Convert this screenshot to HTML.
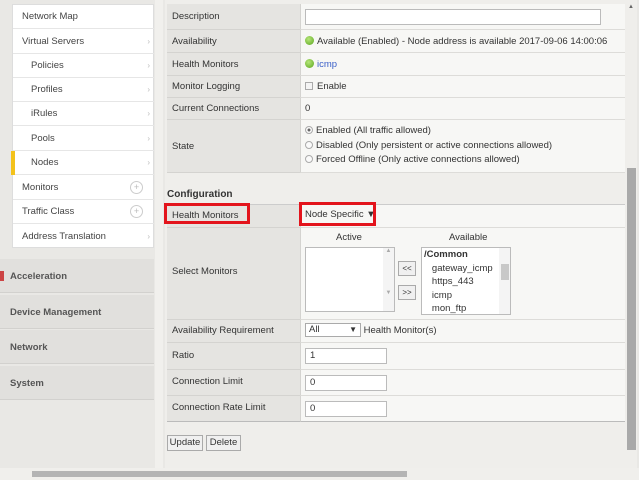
<!DOCTYPE html>
<html><head><style>
*{box-sizing:border-box;margin:0;padding:0}
body{width:639px;height:480px;overflow:hidden;background:#e9e8e5;font-family:"Liberation Sans",Arial,sans-serif;font-size:9.5px;color:#333;position:relative}
.a{position:absolute}
.menu{left:12px;top:4px;width:142px;height:244px;background:#fff;border:1px solid #ddd}
.mi{position:absolute;left:0;width:141px;height:24px;border-bottom:1px solid #e6e6e6;line-height:24px;padding-left:9px;color:#444}
.mi.s{padding-left:18px}
.mi .ar{position:absolute;right:4px;color:#bbb;font-size:8px}
.mi .pl{position:absolute;right:11px;top:5px;width:13px;height:13px;border:1px solid #ccc;border-radius:50%;color:#bbb;font-size:9px;line-height:11px;text-align:center}
.sec{position:absolute;left:0;width:154px;height:34px;border-bottom:1px solid #d2d1ce;background:#e1e0dd;line-height:36px;padding-left:10px;font-weight:bold;color:#555;font-size:9.5px}
.lab{position:absolute;left:167px;width:133px;background:#e5e4e1;border-bottom:1px solid #d4d3d0;padding-left:5px;color:#333}
.val{position:absolute;left:300px;width:325px;background:#f7f7f5;border-bottom:1px solid #dddcd9;border-left:1px solid #d4d3d0;padding-left:4px}
.dot{display:inline-block;width:9px;height:9px;border-radius:50%;background:radial-gradient(circle at 40% 35%,#b6e67a,#5aa51e);vertical-align:-1px;margin-right:3px}
.inp{position:absolute;background:#fff;border:1px solid #bbb;height:16px;padding-left:4px;line-height:14px}
.btn{position:absolute;top:435px;height:16px;border:1px solid #aaa;background:#f0f0f0;line-height:14px;text-align:center;font-size:9.5px}
.rd{display:inline-block;width:8px;height:8px;border-radius:50%;border:1px solid #aaa;background:#fafafa;margin-right:3px;vertical-align:-1px}
.red{position:absolute;border:3px solid #e3141c}
</style></head><body>
<div class="a menu">
<div class="mi" style="top:0">Network Map</div>
<div class="mi" style="top:25px">Virtual Servers<span class="ar">›</span></div>
<div class="mi s" style="top:49px">Policies<span class="ar">›</span></div>
<div class="mi s" style="top:73px">Profiles<span class="ar">›</span></div>
<div class="mi s" style="top:97px">iRules<span class="ar">›</span></div>
<div class="mi s" style="top:122px">Pools<span class="ar">›</span></div>
<div class="mi s" style="top:146px">Nodes<span class="ar">›</span></div>
<div class="mi" style="top:171px">Monitors<span class="pl">+</span></div>
<div class="mi" style="top:195px">Traffic Class<span class="pl">+</span></div>
<div class="mi" style="top:220px;border:0">Address Translation<span class="ar">›</span></div>
</div>
<div class="a" style="left:11px;top:151px;width:4px;height:24px;background:#f3c21b"></div>
<div class="sec" style="top:259px">Acceleration</div>
<div class="sec" style="top:295px">Device Management</div>
<div class="sec" style="top:330px">Network</div>
<div class="sec" style="top:366px">System</div>
<div class="a" style="left:0;top:271px;width:4px;height:10px;background:#c44"></div>
<div class="a" style="left:155px;top:0;width:8px;height:468px;background:#f1f0ed"></div>

<div class="a" style="left:165px;top:0;width:461px;height:470px;background:#efeeeb"></div>
<div class="lab" style="top:4px;height:26px;line-height:26px">Description</div>
<div class="val" style="top:4px;height:26px"><div class="inp" style="left:4px;top:5px;width:296px"></div></div>
<div class="lab" style="top:30px;height:23px;line-height:23px">Availability</div>
<div class="val" style="top:30px;height:23px;line-height:23px"><span class="dot"></span>Available (Enabled) - Node address is available 2017-09-06 14:00:06</div>
<div class="lab" style="top:53px;height:23px;line-height:23px">Health Monitors</div>
<div class="val" style="top:53px;height:23px;line-height:23px"><span class="dot"></span><span style="color:#3a5fc8">icmp</span></div>
<div class="lab" style="top:76px;height:22px;line-height:22px">Monitor Logging</div>
<div class="val" style="top:76px;height:22px;line-height:22px"><span style="display:inline-block;width:8px;height:8px;border:1px solid #aaa;background:#f4f4f4;margin-right:4px;vertical-align:-1px"></span>Enable</div>
<div class="lab" style="top:98px;height:22px;line-height:22px">Current Connections</div>
<div class="val" style="top:98px;height:22px;line-height:22px">0</div>
<div class="lab" style="top:120px;height:53px;line-height:53px">State</div>
<div class="val" style="top:120px;height:53px;line-height:14.5px;padding-top:4px"><span class="rd" style="background:radial-gradient(circle,#666 30%,#fafafa 40%)"></span>Enabled (All traffic allowed)<br><span class="rd"></span>Disabled (Only persistent or active connections allowed)<br><span class="rd"></span>Forced Offline (Only active connections allowed)</div>

<div class="a" style="left:167px;top:189px;font-weight:bold;font-size:10px;color:#333">Configuration</div>
<div class="lab" style="top:204px;height:24px;line-height:22px;border-top:1px solid #ccc">Health Monitors</div>
<div class="val" style="top:204px;height:24px;border-top:1px solid #ccc;line-height:20px">Node Specific ▼</div>
<div class="red" style="left:164px;top:203px;width:86px;height:21px"></div>
<div class="red" style="left:299px;top:202px;width:77px;height:24px"></div>
<div class="lab" style="top:228px;height:92px;line-height:88px">Select Monitors</div>
<div class="val" style="top:228px;height:92px">
<div class="a" style="left:35px;top:4px">Active</div>
<div class="a" style="left:148px;top:4px">Available</div>
<div class="a" style="left:4px;top:19px;width:90px;height:65px;background:#fff;border:1px solid #bbb"><div class="a" style="right:0;top:0;width:11px;height:63px;background:#f4f4f4;color:#aaa;font-size:6px;text-align:center">▲<br><br><br><br><br><br><br>▼</div></div>
<div class="a" style="left:97px;top:33px;width:18px;height:15px;border:1px solid #aaa;background:#f0f0f0;font-size:8px;text-align:center;line-height:13px">&lt;&lt;</div>
<div class="a" style="left:97px;top:57px;width:18px;height:15px;border:1px solid #aaa;background:#f0f0f0;font-size:8px;text-align:center;line-height:13px">&gt;&gt;</div>
<div class="a" style="left:120px;top:19px;width:90px;height:68px;background:#fff;border:1px solid #bbb;line-height:13.5px;padding-left:2px"><b>/Common</b><br>&nbsp;&nbsp;&nbsp;gateway_icmp<br>&nbsp;&nbsp;&nbsp;https_443<br>&nbsp;&nbsp;&nbsp;icmp<br>&nbsp;&nbsp;&nbsp;mon_ftp<div class="a" style="right:0;top:0;width:11px;height:66px;background:#f4f4f4"><div class="a" style="left:2px;top:16px;width:8px;height:16px;background:#c8c8c8"></div></div></div>
</div>
<div class="lab" style="top:320px;height:23px;line-height:22px">Availability Requirement</div>
<div class="val" style="top:320px;height:23px;line-height:22px"><span style="display:inline-block;width:56px;height:14px;border:1px solid #aaa;background:#fff;line-height:12px;padding-left:3px;vertical-align:1px">All<span style="float:right;padding-right:3px;font-size:8px">▼</span></span> Health Monitor(s)</div>
<div class="lab" style="top:343px;height:27px;line-height:25px">Ratio</div>
<div class="val" style="top:343px;height:27px"><div class="inp" style="left:4px;top:5px;width:82px">1</div></div>
<div class="lab" style="top:370px;height:26px;line-height:24px">Connection Limit</div>
<div class="val" style="top:370px;height:26px"><div class="inp" style="left:4px;top:5px;width:82px">0</div></div>
<div class="lab" style="top:396px;height:26px;line-height:24px;border-bottom:1px solid #bbb">Connection Rate Limit</div>
<div class="val" style="top:396px;height:26px;border-bottom:1px solid #bbb"><div class="inp" style="left:4px;top:5px;width:82px">0</div></div>
<div class="btn" style="left:167px;width:36px">Update</div>
<div class="btn" style="left:206px;width:35px">Delete</div>

<div class="a" style="left:626px;top:0;width:11px;height:470px;background:#efeeeb"></div>
<div class="a" style="left:627px;top:168px;width:9px;height:282px;background:#a9a9a9"></div>
<div class="a" style="left:628px;top:4px;font-size:6px;color:#666">▲</div>
<div class="a" style="left:0;top:468px;width:639px;height:12px;background:#f0efec"></div>
<div class="a" style="left:32px;top:471px;width:375px;height:6px;background:#b4b4b4"></div>
</body></html>
